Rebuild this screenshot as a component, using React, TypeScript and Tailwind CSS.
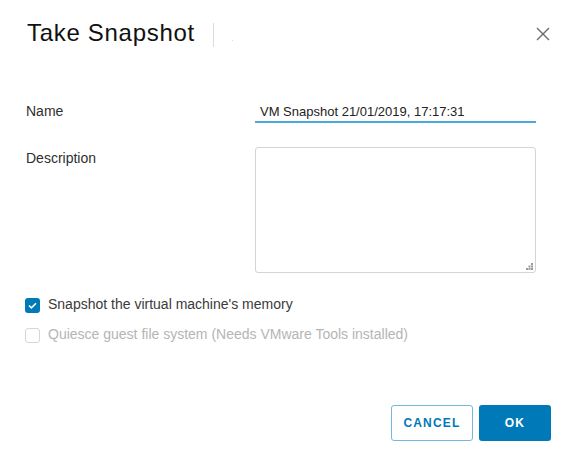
import React from "react";

const font = "font-['Liberation_Sans','Noto_Sans',Arial,sans-serif]";

const CheckRow: React.FC<{ checked?: boolean; disabled?: boolean; label: string }> = ({
  checked,
  disabled,
  label,
}) => (
  <label className="flex h-[30px] items-center">
    <span
      className={
        checked
          ? "flex h-[15px] w-[15px] items-center justify-center rounded-[3px] bg-[#0079b8]"
          : "h-[15px] w-[15px] rounded-[3px] border border-[#d7d7d7] bg-white"
      }
    >
      {checked && (
        <svg width="9" height="7" viewBox="0 0 9 7" fill="none">
          <path d="M1 3.5 L3.4 5.8 L8 1.2" stroke="white" strokeWidth="1.6" />
        </svg>
      )}
    </span>
    <span
      className={`ml-[8px] text-[14px] leading-[16px] -mt-[2px] ${
        disabled ? "text-[#b5b5b5]" : "text-[#3a3a3a]"
      }`}
    >
      {label}
    </span>
  </label>
);

export default function App() {
  return (
    <div className={`h-[464px] w-[575px] bg-white ${font}`}>
      {/* header */}
      <div className="mt-[19px] flex h-[28px] items-center pl-[27px] pr-[25px]">
        <h1 className="text-[24px] leading-[28px] tracking-[0.7px] text-[#111]">Take Snapshot</h1>
        <div className="ml-[18px] mt-[4px] h-[24px] w-px bg-[#dcdcdc]" />
        <div className="ml-[18px] mt-[14px] h-px w-px bg-[#f3dcb0]" />
        <button className="ml-auto mt-[2px] text-[#6a6a6a]" aria-label="Close">
          <svg width="14" height="14" viewBox="0 0 14 14" fill="none">
            <path d="M1 1 L13 13 M13 1 L1 13" stroke="currentColor" strokeWidth="1.4" />
          </svg>
        </button>
      </div>

      {/* form */}
      <div className="mt-[53px] grid grid-cols-[229px_281px] gap-y-[24px] pl-[26px] text-[14px] text-[#2f2f2f]">
        <div className="leading-[23px]">Name</div>
        <div className="h-[23px] border-b-2 border-[#49a9dd] pl-[5px] text-[13px] leading-[23px] text-[#222]">
          VM Snapshot 21/01/2019, 17:17:31
        </div>

        <div className="leading-[23px]">Description</div>
        <div className="relative">
          <textarea className="block h-[126px] w-full resize-none rounded-[3px] border border-[#d4d4d4] outline-none" />
          <svg
            className="absolute bottom-[3px] right-[3px]"
            width="7"
            height="7"
            viewBox="0 0 7 7"
            fill="#9a9a9a"
          >
            <rect x="5" y="0" width="2" height="2" />
            <rect x="2.5" y="2.5" width="2" height="2" />
            <rect x="5" y="2.5" width="2" height="2" />
            <rect x="0" y="5" width="2" height="2" />
            <rect x="2.5" y="5" width="2" height="2" />
            <rect x="5" y="5" width="2" height="2" />
          </svg>
        </div>
      </div>

      <div className="mt-[17px] pl-[25px]">
        <CheckRow checked label="Snapshot the virtual machine's memory" />
        <CheckRow disabled label="Quiesce guest file system (Needs VMware Tools installed)" />
      </div>

      {/* footer */}
      <div className="mt-[55px] flex justify-end gap-[6px] pr-[24px]">
        <button className="h-[36px] w-[82px] rounded-[3px] border border-[#74b6de] text-[12px] font-bold tracking-[1.2px] text-[#0079b8]">
          CANCEL
        </button>
        <button className="h-[36px] w-[72px] rounded-[3px] bg-[#0079b8] text-[12px] font-bold tracking-[1.2px] text-white">
          OK
        </button>
      </div>
    </div>
  );
}
